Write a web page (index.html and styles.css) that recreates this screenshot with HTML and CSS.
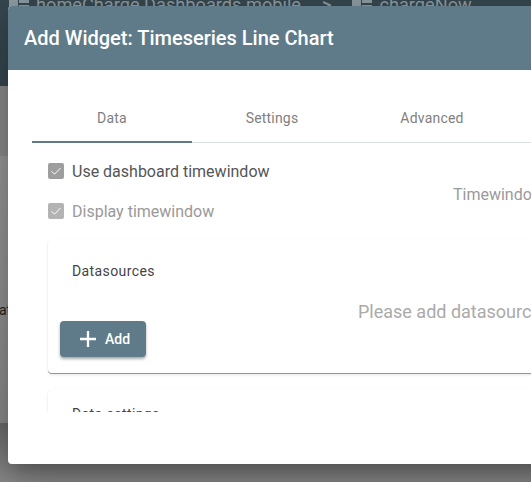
FILE: index.html
```html
<!DOCTYPE html>
<html lang="en">
<head>
  <meta charset="UTF-8">
  <title>Add Widget</title>
  <link rel="stylesheet" href="styles.css">
</head>
<body>
  <div class="page">
    <div class="toolbar">
      <div class="crumbs">
        <svg class="crumb-icon" width="20" height="18" viewBox="0 0 20 18"><path d="M0 0h9v18H0zM10 0h10v3H10zM10 5h10v3H10zM10 10h10v8H10z"/></svg>
        <span class="crumb-text">homeCharge Dashboards mobile</span>
        <span class="crumb-sep">&gt;</span>
        <svg class="crumb-icon" width="20" height="18" viewBox="0 0 20 18"><path d="M0 0h9v18H0zM10 0h10v3H10zM10 5h10v3H10zM10 10h10v8H10z"/></svg>
        <span class="crumb-text">chargeNow</span>
      </div>
    </div>
    <div class="subbar"></div>
    <div class="canvas"><span class="canvas-text">Stat</span></div>
    <div class="page-foot"></div>
  </div>

  <div class="dialog">
    <div class="dialog-head">Add Widget: Timeseries Line Chart</div>
    <div class="dialog-body">
      <div class="tabs">
        <div class="tab active">Data</div>
        <div class="tab">Settings</div>
        <div class="tab">Advanced</div>
      </div>
      <div class="pane">
        <div class="time-row">
          <div class="checks">
            <label class="check">
              <span class="box"><svg width="16" height="16" viewBox="0 0 16 16"><path d="M3.5 8.2l3 3 6-6.2" fill="none" stroke="#fff" stroke-width="1"/></svg></span>
              Use dashboard timewindow
            </label>
            <label class="check muted">
              <span class="box"><svg width="16" height="16" viewBox="0 0 16 16"><path d="M3.5 8.2l3 3 6-6.2" fill="none" stroke="#fff" stroke-width="1"/></svg></span>
              Display timewindow
            </label>
          </div>
          <div class="timewindow">Timewindow</div>
        </div>
        <div class="card">
          <div class="card-title">Datasources</div>
          <div class="empty">Please add datasource</div>
          <button class="add-btn">
            <svg width="16" height="16" viewBox="5 5 14 14"><path d="M19 13h-6v6h-2v-6H5v-2h6V5h2v6h6z" fill="#fff"/></svg>
            Add
          </button>
        </div>
        <div class="card card-next">
          <div class="card-title">Data settings</div>
        </div>
      </div>
    </div>
    <div class="dialog-foot"></div>
  </div>
</body>
</html>
```

FILE: styles.css
```css
html, body {
  margin: 0;
  height: 100%;
  overflow: hidden;
}
body {
  font-family: Roboto, sans-serif;
  background: #6f6f6f;
}
.page {
  height: 482px;
  display: flex;
  flex-direction: column;
}
.toolbar {
  height: 86px;
  background: #36474f;
  color: #8d9aa1;
  font-size: 18.2px;
}
.crumbs {
  display: flex;
  align-items: center;
  height: 24px;
  margin-top: -8px;
  padding-left: 9px;
  white-space: nowrap;
}
.crumb-icon {
  flex: none;
  fill: #8d9aa1;
  margin-right: 7px;
}
.crumb-sep {
  margin: 0 21px;
  font-weight: 500;
}
.subbar {
  height: 70px;
  background: #8a8a8a;
}
.canvas {
  height: 267px;
  flex: none;
  display: flex;
  align-items: center;
  background: linear-gradient(#979797, #8a8a8a);
  border-bottom: 1px solid #6a6a6a;
}
.canvas-text {
  font-size: 14px;
  color: #222;
  margin-left: -14px;
  margin-top: 40px;
}
.page-foot {
  flex: 1;
  background: linear-gradient(#6b6b6b, #8b8b8b);
}

/* dialog over the page */
.dialog {
  position: absolute;
  left: 8px;
  top: 6px;
  width: 800px;
  height: 458px;
  display: flex;
  flex-direction: column;
  background: #fff;
  border-radius: 4px;
  box-shadow: 0 11px 15px -7px rgba(0, 0, 0, 0.2), 0 24px 38px 3px rgba(0, 0, 0, 0.14), 0 9px 46px 8px rgba(0, 0, 0, 0.12);
}
.dialog-head {
  height: 64px;
  flex: none;
  padding-left: 16px;
  line-height: 64px;
  background: #5f7b8a;
  color: #fff;
  font-size: 20px;
  font-weight: 500;
  border-radius: 4px 4px 0 0;
}
.dialog-body {
  height: 342px;
  flex: none;
  overflow: hidden;
  padding: 25px 24px 0;
  box-sizing: border-box;
}
.dialog-foot {
  flex: 1;
}
.tabs {
  display: flex;
  height: 48px;
  box-sizing: border-box;
  border-bottom: 1px solid #dcdfe1;
}
.tab {
  width: 160px;
  text-align: center;
  line-height: 47px;
  font-size: 14px;
  color: #7f7f7f;
  letter-spacing: 0.2px;
}
.tab.active {
  height: 48px;
  box-sizing: border-box;
  border-bottom: 2px solid #5f7b8a;
}
.pane {
  padding: 16px 16px 0;
}
.time-row {
  display: flex;
  justify-content: space-between;
  height: 80px;
}
.checks {
  display: flex;
  flex-direction: column;
  gap: 16px;
}
.check {
  display: flex;
  align-items: center;
  gap: 8px;
  height: 24px;
  font-size: 16px;
  color: #555;
}
.check.muted {
  color: #999;
}
.box {
  width: 16px;
  height: 16px;
  border-radius: 2px;
  background: #9e9e9e;
}
.check.muted .box {
  background: #b3b3b3;
}
.box svg {
  display: block;
}
.timewindow {
  width: 315px;
  flex: none;
  margin-top: 26px;
  font-size: 16px;
  color: #9a9a9a;
}
.card {
  border-radius: 4px;
  background: #fff;
  box-shadow: 0 1px 0 rgba(0, 0, 0, 0.35), 0 2px 3px rgba(0, 0, 0, 0.1), 0 0 2px rgba(0, 0, 0, 0.04);
  margin-bottom: 16px;
  padding: 24px 24px 16px;
}
.card-next {
  padding-top: 17px;
}
.card-title {
  font-size: 14px;
  line-height: 16px;
  color: #444;
  letter-spacing: 0.4px;
}
.empty {
  height: 21px;
  margin: 21px 0 0 286px;
  line-height: 24px;
  font-size: 18px;
  color: #aaa;
  white-space: nowrap;
}
.add-btn {
  display: flex;
  align-items: center;
  gap: 9px;
  width: 86px;
  height: 36px;
  margin-left: -12px;
  padding: 0 0 0 20px;
  border: none;
  border-radius: 4px;
  background: #5f7b8a;
  color: #fff;
  font-family: inherit;
  font-size: 14px;
  font-weight: 500;
  box-shadow: 0 2px 3px rgba(0, 0, 0, 0.35);
}
```
